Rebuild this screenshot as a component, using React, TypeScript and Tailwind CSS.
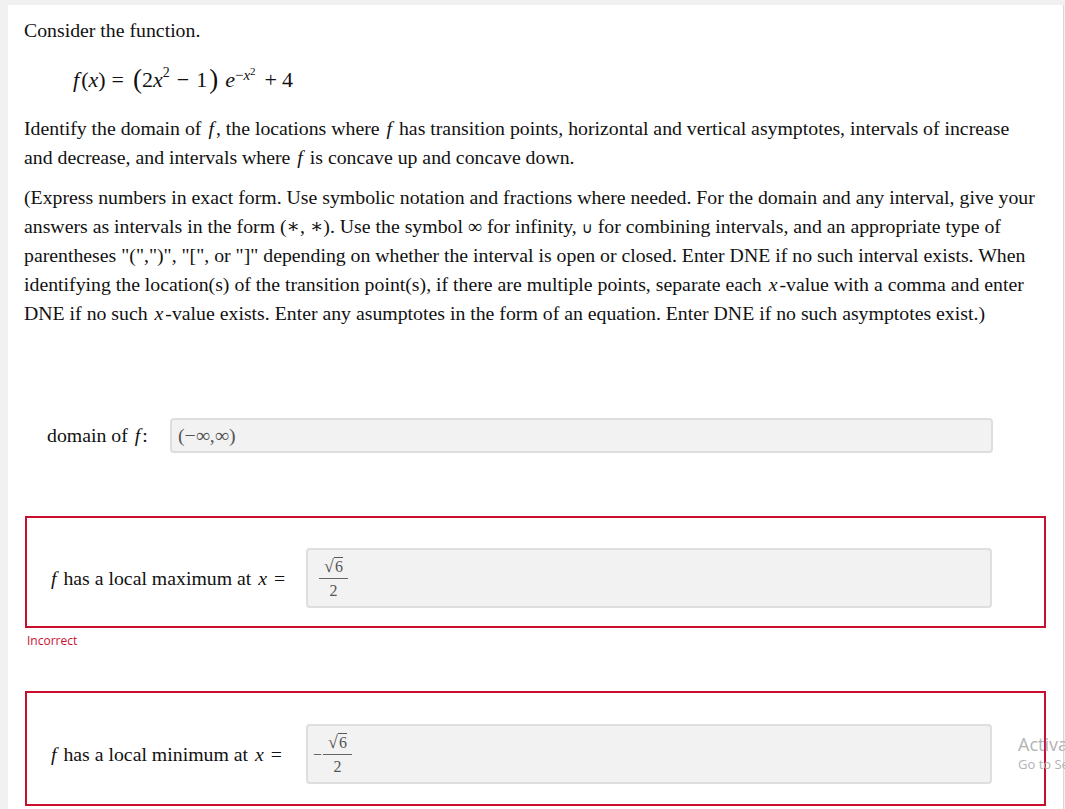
import React from 'react';

const serif = { fontFamily: '"Liberation Serif", "DejaVu Serif", serif' };

const Frac = ({ neg }: { neg?: boolean }) => (
  <span className="inline-flex items-center text-[#555]">
    {neg && <span className="mr-[1px] text-[16px]">−</span>}
    <span className="inline-flex flex-col items-center text-[16px] leading-[16px]">
      <span className="px-[5px] pb-[3px]">
        <span className="text-[18px]">√</span>
        <span className="border-t border-[#555] pl-[1px]">6</span>
      </span>
      <span className="w-full border-t border-[#666] pt-[4px] text-center">2</span>
    </span>
  </span>
);

const Ital = ({ children }: { children: React.ReactNode }) => <i className="mx-[2px]">{children}</i>;

const App = () => {
  return (
    <div className="relative h-[809px] overflow-hidden bg-[#f1f1f1] pl-[8px] pt-[5px] pr-[1px]" style={serif}>
      <div className="min-h-[804px] border-r border-[#d9d9d9] bg-white pl-[16px] pr-[25px] pt-[11px] text-[19.8px] leading-[29px] text-[#111]">
        <p>Consider the function.</p>

        {/* formula */}
        <div className="mt-[20px] flex items-center pl-[49px] text-[22px] leading-[29px]">
          <i>f</i>
          <span className="ml-[2px]">(</span>
          <i>x</i>
          <span>)</span>
          <span className="ml-[6px] mr-[9px]">=</span>
          <span className="text-[27px] leading-none">(</span>
          <span>2</span>
          <i>x</i>
          <sup className="text-[14px]">2</sup>
          <span className="mx-[7px]">−</span>
          <span>1</span>
          <span className="ml-[2px] text-[27px] leading-none">)</span>
          <span className="ml-[7px]">
            <i>e</i>
          </span>
          <sup className="relative top-[-4px] text-[15px]">
            −<i>x</i>
            <span className="relative top-[-5px] text-[11px]">2</span>
          </sup>
          <span className="ml-[9px] mr-[5px]">+</span>
          <span>4</span>
        </div>

        <p className="mt-[20px]">
          Identify the domain of <Ital>f</Ital>, the locations where <Ital>f</Ital> has transition points, horizontal and
          vertical asymptotes, intervals of increase and decrease, and intervals where <Ital>f</Ital> is concave up and
          concave down.
        </p>
        <p className="mt-[11px]">
          (Express numbers in exact form. Use symbolic notation and fractions where needed. For the domain and any
          interval, give your answers as intervals in the form (∗, ∗). Use the symbol ∞ for infinity,{' '}
          <span className="text-[15px] leading-none" style={{ fontFamily: '"DejaVu Sans", sans-serif' }}>∪</span> for
          combining intervals, and an appropriate type of parentheses "(",")", "[", or "]" depending on whether the
          interval is open or closed. Enter DNE if no such interval exists. When identifying the location(s) of the
          transition point(s), if there are multiple points, separate each <Ital>x</Ital>-value with a comma and enter
          DNE if no such <Ital>x</Ital>-value exists. Enter any asumptotes in the form of an equation. Enter DNE if no
          such asymptotes exist.)
        </p>

        {/* domain */}
        <div className="mt-[90px] flex items-center pl-[23px]">
          <span className="w-[123px]">
            domain of <Ital>f</Ital>:
          </span>
          <div className="flex h-[35px] w-[823px] items-center rounded-[4px] border-2 border-[#dedede] bg-[#f2f2f2] pl-[6px] text-[#555]">
            (−∞,∞)
          </div>
        </div>

        {/* local max */}
        <div className="mt-[63px] ml-[1px] mr-[-8px] flex h-[112px] items-start border-2 border-[#c8102e] pl-[22px] pr-[52px] pt-[30px]">
          <div className="flex h-[60px] w-full items-center">
            <span className="w-[257px]">
              <Ital>f</Ital> has a local maximum at <Ital>x</Ital> =
            </span>
            <div className="flex h-[60px] flex-1 items-center rounded-[4px] border-2 border-[#dedede] bg-[#f2f2f2] pl-[11px]">
              <Frac />
            </div>
          </div>
        </div>
        <div
          className="mt-[6px] ml-[3px] text-[12px] leading-[14px] text-[#c8102e]"
          style={{ fontFamily: '"Open Sans", "Liberation Sans", sans-serif' }}
        >
          Incorrect
        </div>

        {/* local min */}
        <div className="mt-[43px] ml-[1px] mr-[-8px] flex h-[115px] items-start border-2 border-[#c8102e] pl-[22px] pr-[52px] pt-[31px]">
          <div className="flex h-[60px] w-full items-center">
            <span className="w-[257px]">
              <Ital>f</Ital> has a local minimum at <Ital>x</Ital> =
            </span>
            <div className="flex h-[60px] flex-1 items-center rounded-[4px] border-2 border-[#dedede] bg-[#f2f2f2] pl-[5px]">
              <Frac neg />
            </div>
          </div>
        </div>
      </div>

      {/* Windows activation watermark */}
      <div
        className="pointer-events-none absolute left-[1018px] top-[733px] whitespace-nowrap text-[#b3b3b3]"
        style={{ fontFamily: '"Open Sans", "Liberation Sans", sans-serif' }}
      >
        <div className="text-[18px] leading-[22px]">Activate Windows</div>
        <div className="text-[13px] leading-[18px]">Go to Settings to activate Windows.</div>
      </div>
    </div>
  );
};

export default App;
